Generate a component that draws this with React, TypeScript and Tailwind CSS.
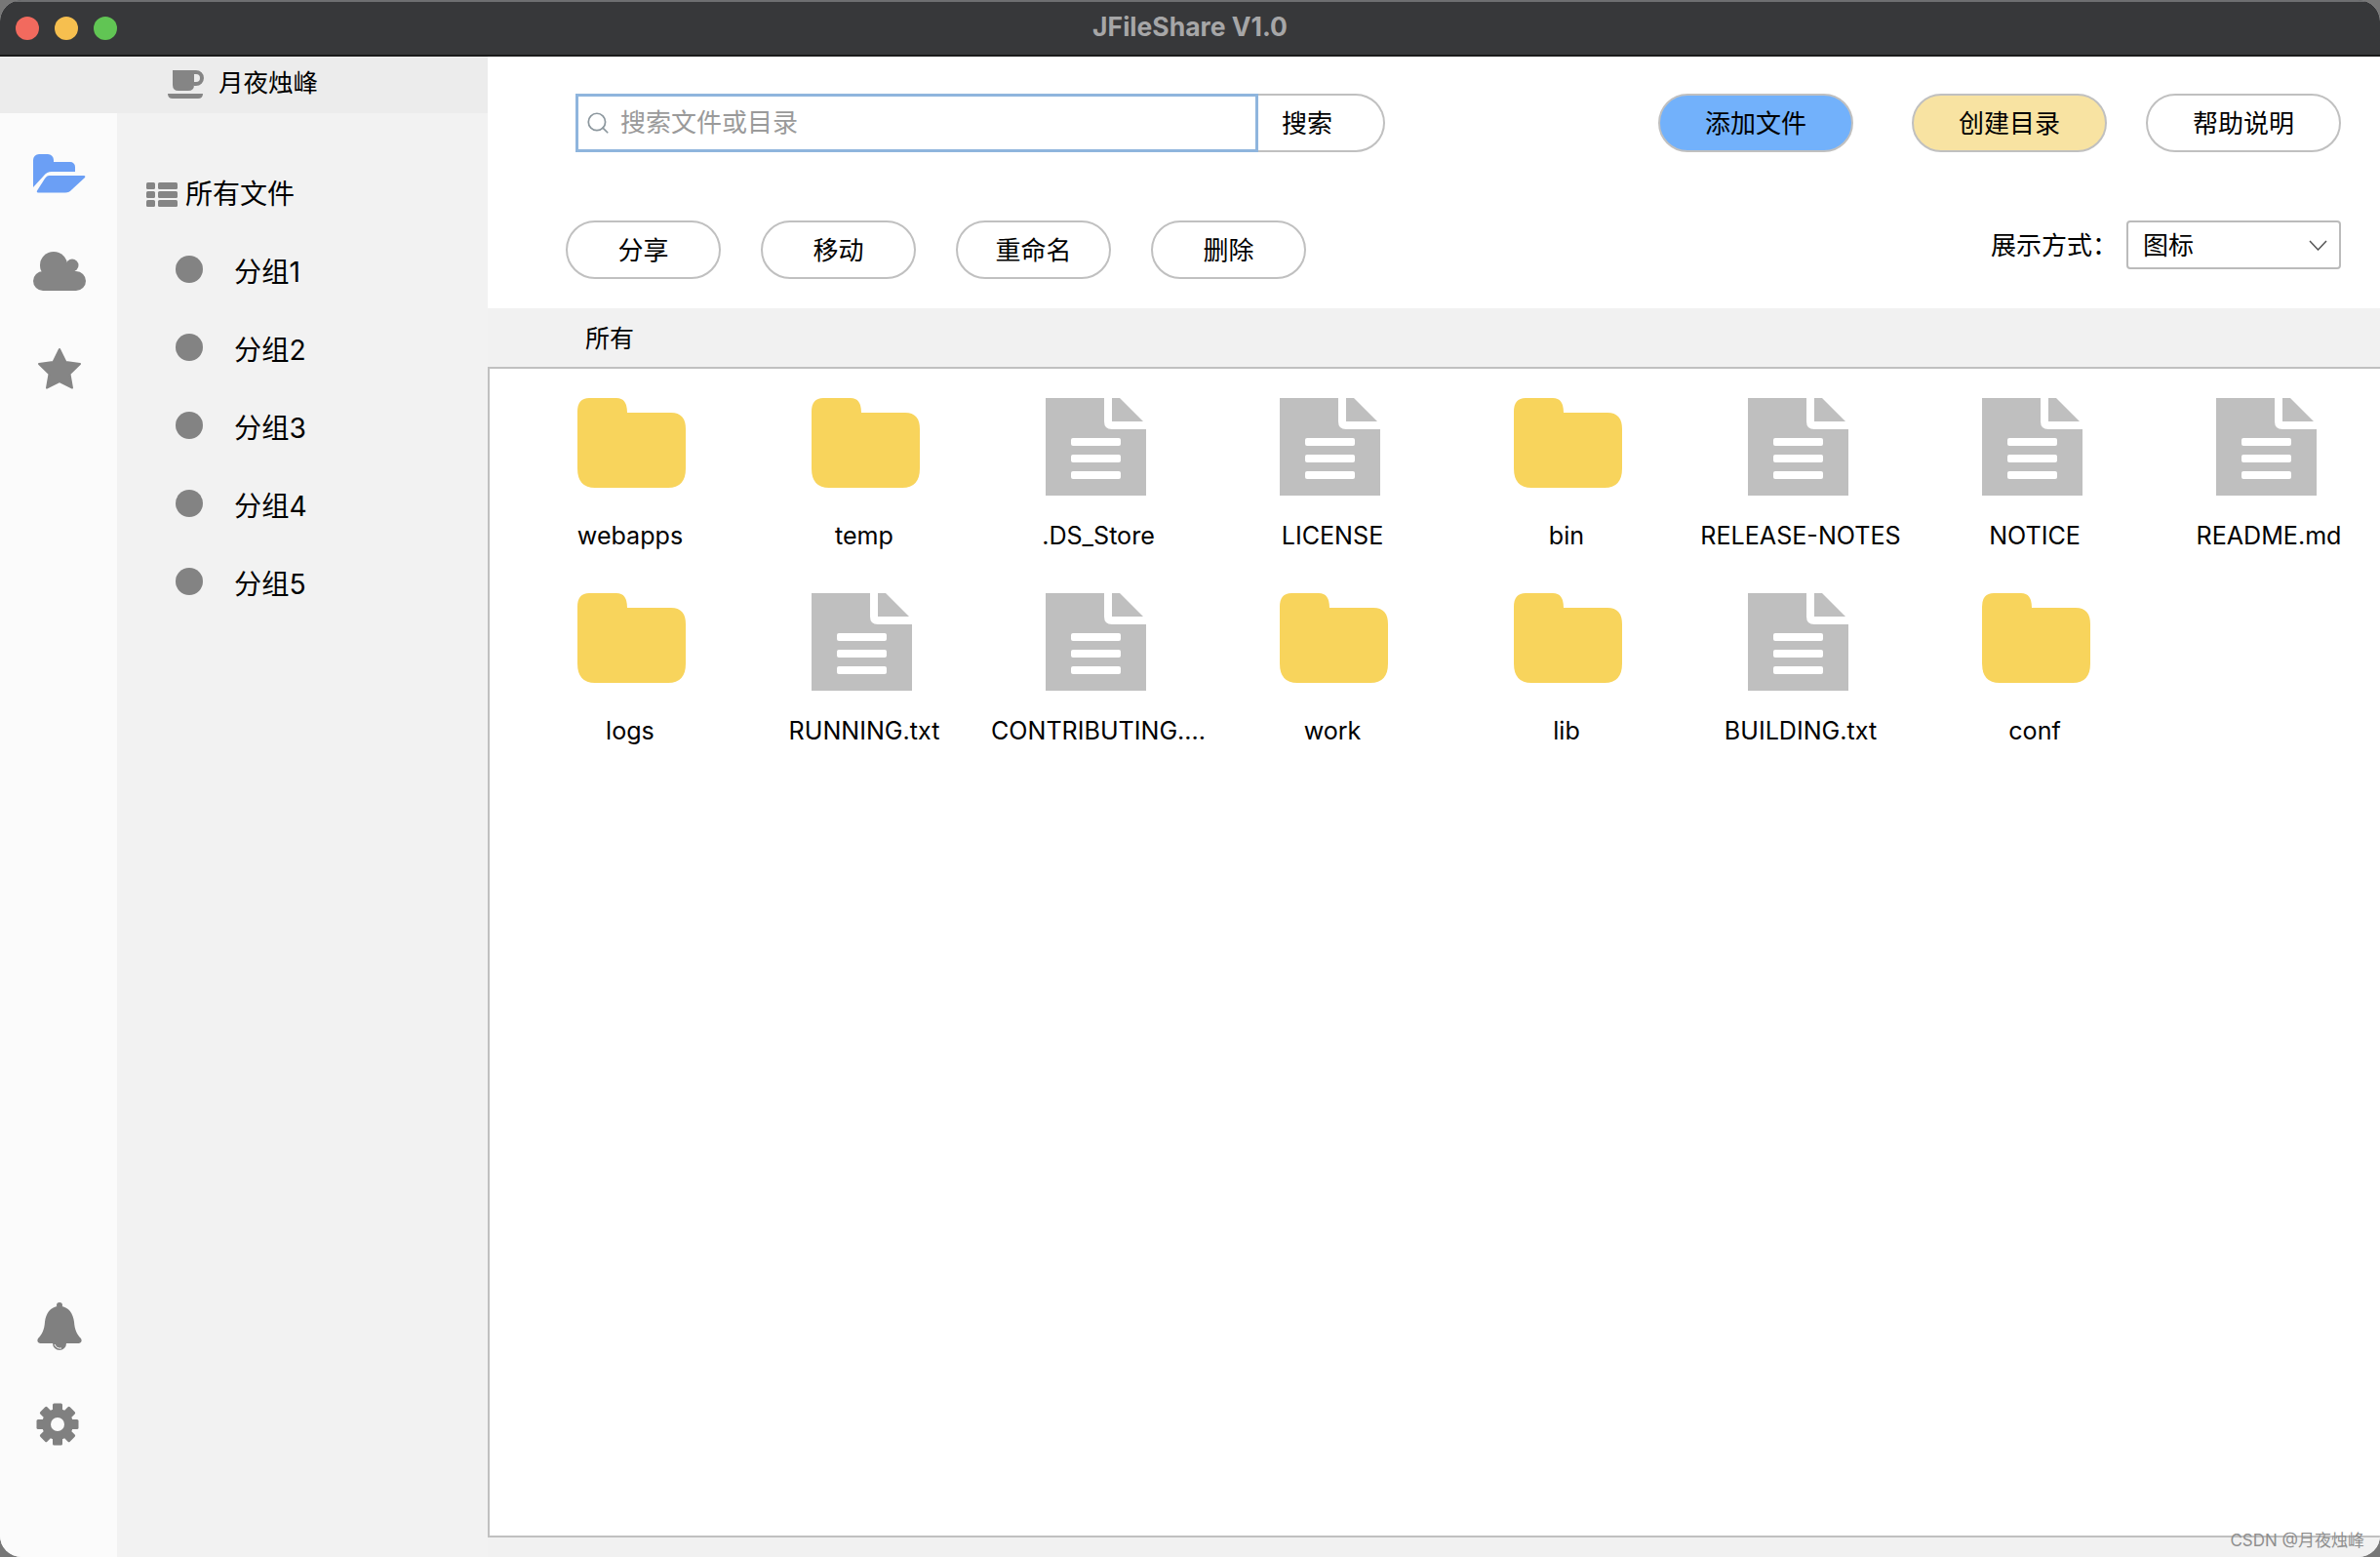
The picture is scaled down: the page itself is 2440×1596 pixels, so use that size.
import React from 'react';
import { Search } from 'lucide-react';

const files = [
  { name: 'webapps', dir: true },
  { name: 'temp', dir: true },
  { name: '.DS_Store', dir: false },
  { name: 'LICENSE', dir: false },
  { name: 'bin', dir: true },
  { name: 'RELEASE-NOTES', dir: false },
  { name: 'NOTICE', dir: false },
  { name: 'README.md', dir: false },
  { name: 'logs', dir: true },
  { name: 'RUNNING.txt', dir: false },
  { name: 'CONTRIBUTING....', dir: false },
  { name: 'work', dir: true },
  { name: 'lib', dir: true },
  { name: 'BUILDING.txt', dir: false },
  { name: 'conf', dir: true },
];

const groups = ['分组1', '分组2', '分组3', '分组4', '分组5'];
const actions = ['分享', '移动', '重命名', '删除'];

const FolderIcon = () => (
  <svg width="120" height="100" viewBox="0 0 120 100">
    <path
      transform="translate(6 0)"
      fill="#f8d45c"
      d="M0 14Q0 0 12 0H40Q51 0 51 15H96Q111 15 111 32V72Q111 92 93 92H18Q0 92 0 72Z"
    />
  </svg>
);

const FileIcon = () => (
  <svg width="120" height="100" viewBox="0 0 120 100">
    <g transform="translate(6 0)">
      <path fill="#bfbfbf" d="M0 0H60V24Q60 32 68 32H103V100H0Z" />
      <path fill="#bfbfbf" d="M68 0H76L100 24H68Z" />
      <rect x="26" y="41" width="51" height="8" rx="2" fill="#fff" />
      <rect x="26" y="58" width="51" height="8" rx="2" fill="#fff" />
      <rect x="26" y="75" width="51" height="8" rx="2" fill="#fff" />
    </g>
  </svg>
);

const CupIcon = () => (
  <svg width="37" height="29" viewBox="0 0 37 29" fill="#858585">
    <path fillRule="evenodd" d="M5 0H29A8 8 0 0 1 29 16H27V15Q27 21 21 21H11Q5 21 5 15ZM27 4V12H29A4 4 0 0 0 29 4Z" />
    <path d="M0 24H36Q36 29 31 29H5Q0 29 0 24Z" />
  </svg>
);

const ListIcon = () => (
  <svg width="32" height="25" viewBox="0 0 32 25" fill="#858585">
    <rect x="0" y="0" width="9" height="7" rx="1.5" />
    <rect x="12" y="0" width="20" height="7" rx="1.5" />
    <rect x="0" y="9" width="9" height="7" rx="1.5" />
    <rect x="12" y="9" width="20" height="7" rx="1.5" />
    <rect x="0" y="18" width="9" height="7" rx="1.5" />
    <rect x="12" y="18" width="20" height="7" rx="1.5" />
  </svg>
);

const OpenFolderIcon = () => (
  <svg width="54" height="40" viewBox="0 0 54 40" fill="#6b9ff5">
    <path d="M0 6A6 6 0 0 1 6 0H15A6 6 0 0 1 21 6V8H38A5 5 0 0 1 43 13V18H19Q14 18 11 22L0 34Z" />
    <path d="M16 22H52Q54 22 53 24L40 36Q37 39.5 33 39.5H6Q3 39.5 4 37.5L12 25Q14 22 16 22Z" />
  </svg>
);

const CloudIcon = () => (
  <svg width="54" height="40" viewBox="0 0 54 40" fill="#858585">
    <circle cx="21" cy="14" r="14" />
    <circle cx="40" cy="14" r="6.5" />
    <circle cx="10" cy="30" r="10" />
    <circle cx="44" cy="30" r="10" />
    <rect x="10" y="20" width="34" height="20" />
    <rect x="21" y="14" width="19" height="8" />
  </svg>
);

const StarIcon = () => (
  <svg width="46" height="44" viewBox="0 0 46 44">
    <polygon
      fill="#858585"
      stroke="#858585"
      strokeWidth="2"
      strokeLinejoin="round"
      points="23,2 29.5,15.1 44,17 33.5,27.4 36,41.6 23,35 10,41.6 12.5,27.4 2,17 16.5,15.1"
    />
  </svg>
);

const BellIcon = () => (
  <svg width="46" height="50" viewBox="0 0 46 50" fill="#808080">
    <circle cx="23" cy="3" r="3" />
    <path d="M23 4C13 4 9 12 8 20C7.5 28 5 33 1 37Q-1 41 3 42H43Q47 41 45 37C41 33 38.5 28 38 20C37 12 33 4 23 4Z" />
    <path d="M16 42A7 7 0 0 0 30 42Z" />
    <path d="M18 43A6 6 0 0 0 25 47" fill="none" stroke="#fbfbfb" strokeWidth="1" />
  </svg>
);

const GearIcon = () => (
  <svg width="44" height="44" viewBox="0 0 44 44" fill="#808080">
    {[0, 45, 90, 135, 180, 225, 270, 315].map((deg) => (
      <rect key={deg} x="17" y="0.5" width="10" height="12" rx="1.5" transform={`rotate(${deg} 22 22)`} />
    ))}
    <circle cx="22" cy="22" r="16" />
    <circle cx="22" cy="22" r="7" fill="#fbfbfb" />
  </svg>
);

const PillButton = ({ label, className }: { label: string; className: string }) => (
  <button className={`h-[60px] rounded-[30px] border-2 border-[#c0c0c0] text-[26px] text-black ${className}`}>
    {label}
  </button>
);

const App: React.FC = () => {
  return (
    <div className="w-[2440px] h-[1596px] bg-[#777777] overflow-hidden [font-family:Inter,'Noto_Sans_CJK_SC',sans-serif]">
      <div className="w-full h-full rounded-[22px] overflow-hidden flex flex-col bg-white">
        <div className="h-[58px] shrink-0 flex items-center relative bg-[#37383a] border-t-2 border-t-[#6e6f71] border-b-2 border-b-[#1a1a1a]">
          <div className="flex gap-4 pl-4">
            <span className="w-6 h-6 rounded-full bg-[#f26a5e]" />
            <span className="w-6 h-6 rounded-full bg-[#f6bf4f]" />
            <span className="w-6 h-6 rounded-full bg-[#61c554]" />
          </div>
          <div className="absolute inset-x-0 pb-[2px] text-center text-[26.5px] font-bold text-[#a6a6a7]">JFileShare V1.0</div>
        </div>

        <div className="flex-1 flex min-h-0">
          <aside className="w-[500px] shrink-0 flex flex-col">
            <div className="h-[58px] shrink-0 bg-[#ececec] flex items-center pl-[172px] pb-[2px]">
              <CupIcon />
              <span className="ml-[15px] pb-[1px] text-[25.5px] text-black">月夜烛峰</span>
            </div>
            <div className="flex-1 flex min-h-0">
              <div className="w-[120px] shrink-0 bg-[#fbfbfb] flex flex-col pl-[34px]">
                <div className="mt-[42px]">
                  <OpenFolderIcon />
                </div>
                <div className="mt-[60px]">
                  <CloudIcon />
                </div>
                <div className="mt-[58px] ml-[4px]">
                  <StarIcon />
                </div>
                <div className="mt-auto ml-[4px]">
                  <BellIcon />
                </div>
                <div className="mt-[53px] mb-[114px] ml-[3px]">
                  <GearIcon />
                </div>
              </div>
              <nav className="flex-1 bg-[#f2f2f2] pt-[63px]">
                <div className="h-[40px] flex items-center pl-[30px]">
                  <ListIcon />
                  <span className="ml-[8px] text-[28px] leading-[40px] text-black">所有文件</span>
                </div>
                <div className="mt-[43px] flex flex-col">
                  {groups.map((g) => (
                    <div key={g} className="h-[80px] flex pl-[60px]">
                      <span className="w-[28px] h-[28px] rounded-full bg-[#838383]" />
                      <span className="ml-[32px] mt-[1px] text-[28.2px] leading-[32px] text-black">{g}</span>
                    </div>
                  ))}
                </div>
              </nav>
            </div>
          </aside>

          <main className="flex-1 flex flex-col min-w-0">
            <div className="h-[258px] shrink-0 pt-[38px]">
              <div className="flex items-center pr-[40px] pl-[90px]">
                <div className="relative w-[700px] h-[60px] border-[3px] border-[#8fb5dd] flex items-center">
                  <Search size={26} strokeWidth={1.6} className="absolute left-[7px] text-[#8c979e]" />
                  <input
                    placeholder="搜索文件或目录"
                    className="w-full h-full pl-[43px] pb-[2px] text-[26px] text-black outline-none placeholder:text-[#9a9a9a]"
                  />
                </div>
                <button className="w-[130px] h-[60px] pr-[28px] rounded-r-[30px] border-2 border-l-0 border-[#c0c0c0] text-[26px] text-black">
                  搜索
                </button>
                <div className="ml-auto flex">
                  <PillButton label="添加文件" className="w-[200px] bg-[#72b1fb]" />
                  <PillButton label="创建目录" className="w-[200px] ml-[60px] bg-[#f8e3a2]" />
                  <PillButton label="帮助说明" className="w-[200px] ml-[40px] bg-white" />
                </div>
              </div>
              <div className="flex items-start mt-[70px] pr-[40px] pl-[80px]">
                <div className="flex gap-[41px]">
                  {actions.map((a) => (
                    <PillButton key={a} label={a} className="w-[159px] bg-white" />
                  ))}
                </div>
                <div className="ml-auto flex items-center h-[50px]">
                  <span className="text-[26px] text-black">展示方式：</span>
                  <div className="ml-[9px] w-[220px] h-[50px] rounded-[4px] border-2 border-[#bbbbbb] flex items-center justify-between pl-[15px] pr-[12px]">
                    <span className="text-[26px] text-black">图标</span>
                    <svg width="19" height="11" viewBox="0 0 19 11" fill="none" stroke="#555" strokeWidth="1.5">
                      <path d="M1 1L9.5 10L18 1" />
                    </svg>
                  </div>
                </div>
              </div>
            </div>

            <div className="h-[60px] shrink-0 bg-[#f1f1f1] flex items-center pl-[100px] pt-[4px] text-[25px] text-black">所有</div>

            <div className="flex-1 min-h-0 border-2 border-r-0 border-[#c0c0c0] bg-white overflow-hidden pt-[30px] pl-[24px]">
              <div className="grid grid-cols-[repeat(8,240px)] auto-rows-[200px]">
                {files.map((f) => (
                  <div key={f.name} className="flex flex-col items-center">
                    {f.dir ? <FolderIcon /> : <FileIcon />}
                    <span className="mt-[26px] text-[25.1px] leading-[30px] text-black whitespace-nowrap">{f.name}</span>
                  </div>
                ))}
              </div>
            </div>

            <div className="h-[20px] shrink-0 bg-[#f1f1f1] relative">
              <span className="absolute right-[16px] top-[-9px] text-[17px] leading-[24px] text-[#8f8f8f] whitespace-nowrap">
                CSDN @月夜烛峰
              </span>
            </div>
          </main>
        </div>
      </div>
    </div>
  );
};

export default App;
